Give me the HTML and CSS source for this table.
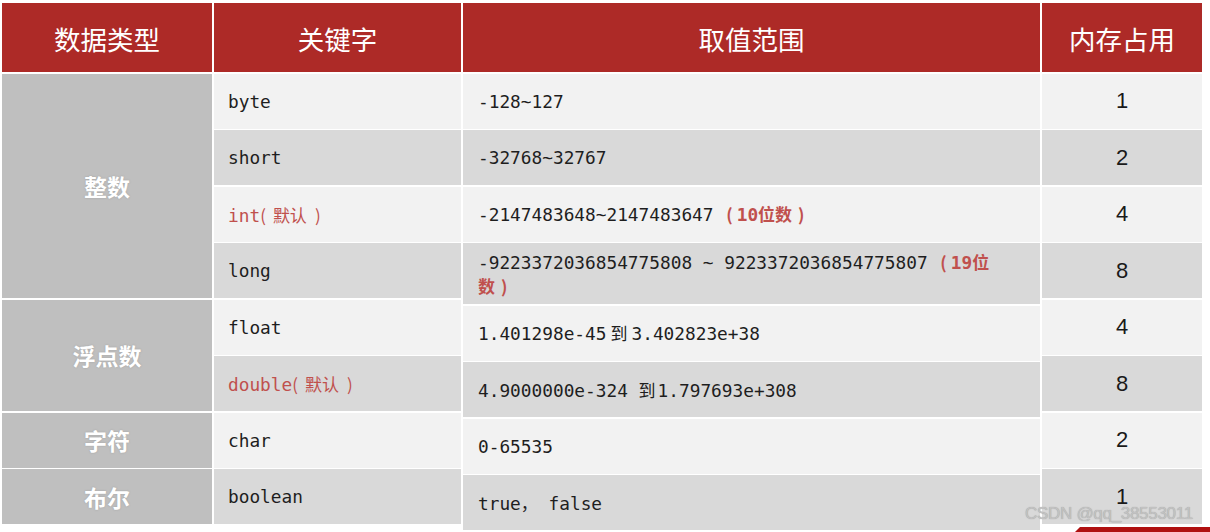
FILE: index.html
```html
<!DOCTYPE html>
<html lang="zh-CN">
<head>
<meta charset="utf-8">
<title>Java 基本数据类型</title>
<link rel="stylesheet" href="styles.css">
</head>
<body>
<div class="slide">
  <div class="col c1">
    <div class="cell head">数据类型</div>
    <div class="cell cat span4">整数</div>
    <div class="cell cat span2">浮点数</div>
    <div class="cell cat row">字符</div>
    <div class="cell cat row">布尔</div>
  </div>
  <div class="col c2">
    <div class="cell head">关键字</div>
    <div class="cell key row light">byte</div>
    <div class="cell key row dark">short</div>
    <div class="cell key row light red"><span>int<span class="cjk">(<span class="inner">默认</span>)</span></span></div>
    <div class="cell key row dark">long</div>
    <div class="cell key row light">float</div>
    <div class="cell key row dark red"><span>double<span class="cjk">(<span class="inner">默认</span>)</span></span></div>
    <div class="cell key row light">char</div>
    <div class="cell key row dark">boolean</div>
  </div>
  <div class="col c3">
    <div class="cell head">取值范围</div>
    <div class="cell range row light">-128~127</div>
    <div class="cell range row dark">-32768~32767</div>
    <div class="cell range row light"><span>-2147483648~2147483647 <b class="red"><span class="cjk open">(</span>10<span class="cjk">位数</span><span class="cjk close">)</span></b></span></div>
    <div class="cell range tall dark"><span>-9223372036854775808 ~ 9223372036854775807 <b class="red"><span class="cjk open">(</span>19<span class="cjk">位</span><br><span class="cjk">数</span><span class="cjk close">)</span></b></span></div>
    <div class="cell range row light"><span>1.401298e-45<span class="cjk to">到</span>3.402823e+38</span></div>
    <div class="cell range row dark"><span>4.9000000e-324 <span class="cjk to2">到</span>1.797693e+308</span></div>
    <div class="cell range row light">0-65535</div>
    <div class="cell range row dark"><span>true<span class="cjk">，</span> false</span></div>
  </div>
  <div class="col c4">
    <div class="cell head">内存占用</div>
    <div class="cell size row light">1</div>
    <div class="cell size row dark">2</div>
    <div class="cell size row light">4</div>
    <div class="cell size row dark">8</div>
    <div class="cell size row light">4</div>
    <div class="cell size row dark">8</div>
    <div class="cell size row light">2</div>
    <div class="cell size row dark">1</div>
  </div>
  <div class="ribbon"></div>
  <div class="watermark">CSDN @qq_38553011</div>
</div>
</body>
</html>
```

FILE: styles.css
```css
html, body {
  margin: 0;
  padding: 0;
  background: #ffffff;
  width: 1210px;
  height: 532px;
  overflow: hidden;
}

.slide {
  position: relative;
  display: flex;
  gap: 2px;
  padding: 3px 0 0 2px;
  width: 1210px;
  height: 532px;
  box-sizing: border-box;
  font-family: "DejaVu Sans Mono", "Liberation Mono", "Noto Sans CJK SC", monospace;
  color: #1e1e1e;
}

.col {
  display: flex;
  flex-direction: column;
  gap: 1.5px;
}

.c1 { width: 210px; }
.c2 { width: 247px; }
.c3 { width: 577px; }
.c4 { width: 160px; }

.cell {
  display: flex;
  align-items: center;
  box-sizing: border-box;
}

.head {
  height: 69px;
  background: #ad2a27;
  color: #ffffff;
  justify-content: center;
  font-family: "Noto Sans CJK SC", sans-serif;
  font-size: 26.5px;
  font-weight: 400;
  padding-top: 2px;
}

.row { height: 55px; }
.tall { height: 61px; }
.span4 { height: 224.5px; }
.span2 { height: 111.5px; }

.light { background: #f2f2f2; }
.dark { background: #d9d9d9; }

.cat {
  background: #bfbfbf;
  color: #ffffff;
  justify-content: center;
  font-family: "Noto Sans CJK SC", sans-serif;
  font-size: 23px;
  font-weight: 700;
  text-shadow: 0 0 2px rgba(120, 120, 120, 0.45);
}

.key {
  padding-left: 14px;
  font-size: 17.8px;
}

.range {
  padding-left: 15px;
  padding-right: 20px;
  font-size: 17.8px;
  line-height: 23px;
}

.size {
  justify-content: center;
  font-family: "Liberation Sans Narrow", "Liberation Sans", sans-serif;
  font-size: 22px;
  color: #1a1a1a;
}

.red { color: #c0504d; }

b.red { font-weight: 700; }

.cjk {
  font-family: "Noto Sans CJK SC", sans-serif;
  font-weight: 400;
  font-size: 17px;
}

b .cjk { font-weight: 700; }

.inner { margin: 0 8px 0 7px; }

.open { margin: 0 4px 0 2px; }
.close { margin-left: 6px; }

.to { margin: 0 4px 0 4px; }
.to2 { margin: 0 2px 0 0; }

.ribbon {
  position: absolute;
  left: 1068px;
  top: 527px;
  width: 142px;
  height: 12px;
  background: #b01010;
  clip-path: polygon(12px 0, 100% 0, 100% 100%, 0 100%);
}

.watermark {
  position: absolute;
  left: 1025px;
  top: 504px;
  font-family: "Liberation Sans", sans-serif;
  font-size: 17px;
  color: #c2c2c2;
  text-shadow: 0 0 1px #9a9a9a;
  letter-spacing: -0.3px;
}
```
